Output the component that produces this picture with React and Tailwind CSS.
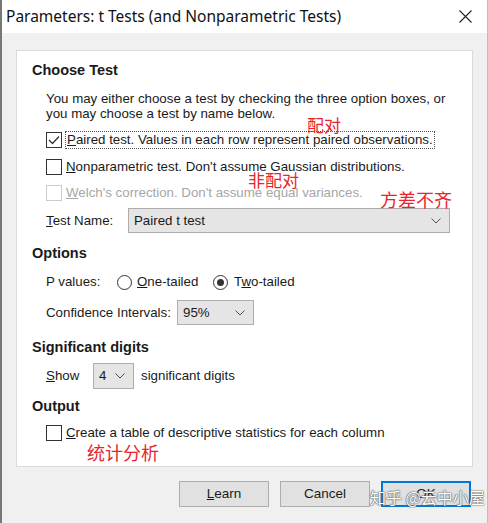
import React from 'react';

const sans = 'font-["Liberation_Sans",Arial,sans-serif]';
const cjk = 'font-["Noto_Sans_CJK_SC",sans-serif]';

function CheckBox({ checked, disabled }) {
  return (
    <span
      className={`w-4 h-4 border flex items-center justify-center bg-white shrink-0 ${
        disabled ? 'border-[#cccccc]' : 'border-[#333333]'
      }`}
    >
      {checked && (
        <svg width="12" height="10" viewBox="0 0 12 10">
          <path d="M1 5 L4.5 8.5 L11 1.5" fill="none" stroke="#333" strokeWidth="1.3" />
        </svg>
      )}
    </span>
  );
}

function Radio({ checked }) {
  return (
    <span className="w-[15px] h-[15px] rounded-full border border-[#333333] bg-white flex items-center justify-center shrink-0">
      {checked && <span className="w-[7px] h-[7px] rounded-full bg-[#333333]" />}
    </span>
  );
}

function Chevron() {
  return (
    <svg width="10" height="6" viewBox="0 0 10 6">
      <path d="M0.5 0.5 L5 5 L9.5 0.5" fill="none" stroke="#555" strokeWidth="1" />
    </svg>
  );
}

function Select({ value, className }) {
  return (
    <div
      className={`bg-[#e5e5e5] border border-[#adadad] flex items-center justify-between pl-[5px] pr-[8px] ${className}`}
    >
      <span>{value}</span>
      <Chevron />
    </div>
  );
}

function Heading({ children, className }) {
  return <div className={`font-bold h-4 leading-4 text-[14.5px] ${className}`}>{children}</div>;
}

function Note({ children, className }) {
  return (
    <span className={`absolute text-[#e8242d] text-[17px] leading-none whitespace-nowrap ${cjk} ${className}`}>
      {children}
    </span>
  );
}

export default function App() {
  return (
    <div className={`w-[488px] h-[523px] bg-[#f0f0f0] flex flex-col border-l-2 border-l-[#777777] border-r border-r-[#bdbdbd] text-[#1a1a1a] ${sans} text-[13.3px] relative overflow-hidden`}>
      {/* ===== Title bar ===== */}
      <div className="h-[33px] bg-white flex items-center justify-between pl-[4px] pr-[15px] shrink-0">
        <span className={`text-[15.5px] text-[#111] font-["Noto_Sans",sans-serif]`}>
          Parameters: t Tests (and Nonparametric Tests)
        </span>
        <svg width="13" height="13" viewBox="0 0 13 13">
          <path d="M0.5 0.5 L12.5 12.5 M12.5 0.5 L0.5 12.5" stroke="#222" strokeWidth="1.1" />
        </svg>
      </div>

      {/* ===== Main panel ===== */}
      <div className="pl-[14px] pr-[14px] pt-[17px]">
        <div className="relative h-[417px] bg-white border border-[#dadada] pl-[15px] pt-[11px] flex flex-col">
          <Heading>Choose Test</Heading>

          <div className="ml-[14px] mt-[13px] leading-[15px]">
            <div>You may either choose a test by checking the three option boxes, or</div>
            <div>you may choose a test by name below.</div>
          </div>

          <div className="ml-[14px] mt-[10px] h-[18px] flex items-center gap-[3px]">
            <CheckBox checked />
            <span className="border border-dotted border-[#555] px-[1px] leading-[16px]">
              <u>P</u>aired test. Values in each row represent paired observations.
            </span>
          </div>

          <div className="ml-[14px] mt-[9px] h-[18px] flex items-center gap-[4px]">
            <CheckBox />
            <span>
              <u>N</u>onparametric test. Don't assume Gaussian distributions.
            </span>
          </div>

          <div className="ml-[14px] mt-[8px] h-[18px] flex items-center gap-[4px] text-[#a6a6a6]">
            <CheckBox disabled />
            <span>
              <u>W</u>elch's correction. Don't assume equal variances.
            </span>
          </div>

          <div className="ml-[14px] mt-[6px] h-[25px] flex items-center">
            <span className="w-[82px]">
              <u>T</u>est Name:
            </span>
            <Select value="Paired t test" className="w-[322px] h-[25px]" />
          </div>

          <Heading className="mt-[12px]">Options</Heading>

          <div className="ml-[14px] mt-[12px] h-[18px] flex items-center">
            <span className="w-[71px]">P values:</span>
            <Radio />
            <span className="ml-[5px] w-[76px]">
              <u>O</u>ne-tailed
            </span>
            <Radio checked />
            <span className="ml-[6px]">
              T<u>w</u>o-tailed
            </span>
          </div>

          <div className="ml-[14px] mt-[9px] h-[25px] flex items-center">
            <span className="w-[131px]">Confidence Intervals:</span>
            <Select value="95%" className="w-[77px] h-[25px]" />
          </div>

          <Heading className="mt-[14px]">Significant digits</Heading>

          <div className="ml-[14px] mt-[8px] h-[26px] flex items-center">
            <span className="w-[47px]">
              <u>S</u>how
            </span>
            <Select value="4" className="w-[41px] h-[26px]" />
            <span className="ml-[7px]">significant digits</span>
          </div>

          <Heading className="mt-[9px]">Output</Heading>

          <div className="ml-[14px] mt-[10px] h-[18px] flex items-center gap-[4px]">
            <CheckBox />
            <span>
              <u>C</u>reate a table of descriptive statistics for each column
            </span>
          </div>

          {/* red annotations */}
          <Note className="left-[290px] top-[65px]">配对</Note>
          <Note className="left-[231px] top-[120px]">非配对</Note>
          <Note className="left-[363px] top-[139px] text-[18px]">方差不齐</Note>
          <Note className="left-[70px] top-[392px] text-[18px]">统计分析</Note>
        </div>
      </div>

      {/* ===== Buttons ===== */}
      <div className="flex justify-end gap-[11px] pr-[16px] mt-[14px]">
        <button className="w-[90px] h-[26px] bg-[#e1e1e1] border border-[#adadad] text-[13.5px]">
          <u>L</u>earn
        </button>
        <button className="w-[90px] h-[26px] bg-[#e1e1e1] border border-[#adadad] text-[13.5px]">
          Cancel
        </button>
        <button className="w-[90px] h-[26px] bg-[#e1e1e1] border-2 border-[#0078d7] text-[13.5px]">
          OK
        </button>
      </div>

      {/* watermark */}
      <span
        className={`absolute left-[368px] top-[489px] text-white text-[16px] leading-none whitespace-nowrap ${cjk} [text-shadow:0_0_1px_#555,0_0_1px_#555,0_0_2px_#777]`}
      >
        知乎 @云中小屋
      </span>
    </div>
  );
}
